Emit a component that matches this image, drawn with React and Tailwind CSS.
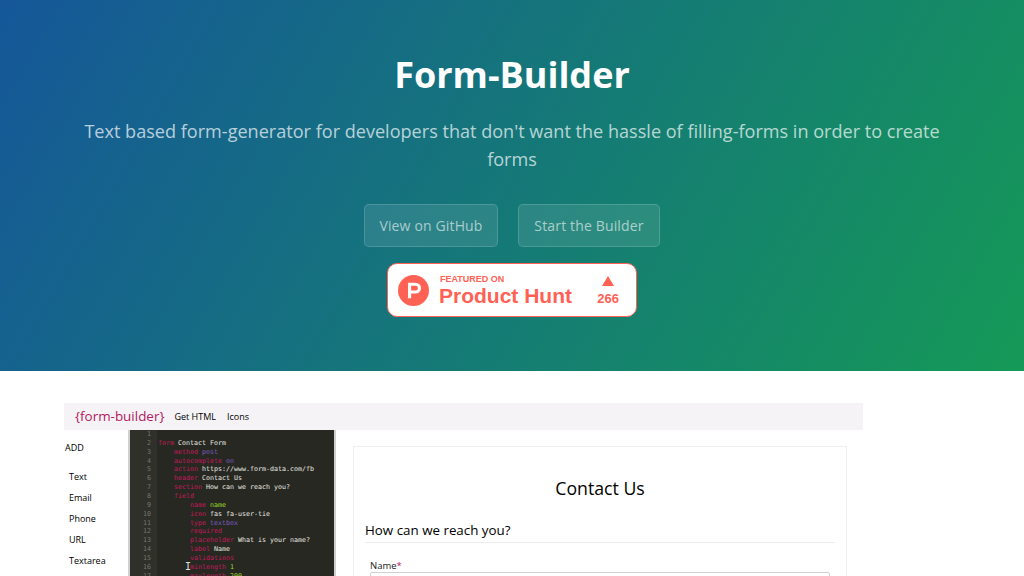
const code = [
  [],
  [["k","form"],["w"," Contact Form"]],
  [["i","    "],["k","method"],["p"," post"]],
  [["i","    "],["k","autocomplete"],["p"," on"]],
  [["i","    "],["k","action"],["w"," https://www.form-data.com/fb"]],
  [["i","    "],["k","header"],["w"," Contact Us"]],
  [["i","    "],["k","section"],["w"," How can we reach you?"]],
  [["i","    "],["k","field"]],
  [["i","        "],["k","name"],["g"," name"]],
  [["i","        "],["k","icon"],["w"," fas fa-user-tie"]],
  [["i","        "],["k","type"],["p"," textbox"]],
  [["i","        "],["k","required"]],
  [["i","        "],["k","placeholder"],["w"," What is your name?"]],
  [["i","        "],["k","label"],["w"," Name"]],
  [["i","        "],["k","validations"]],
  [["i","        "],["k","minlength"],["g"," 1"]],
  [["i","        "],["k","maxlength"],["g"," 200"]],
];

const tone = {
  k: "text-[#c2185b]",
  p: "text-[#7a5cc0]",
  w: "text-[#e8e8e0]",
  g: "text-[#9ad82a]",
  i: "",
};

const sideItems = ["Text", "Email", "Phone", "URL", "Textarea"];

function ProductHunt() {
  return (
    <div className="flex h-[54px] w-[250px] items-center rounded-[10px] border border-[#ff6154] bg-white pl-[10px] pr-[17px] font-['Liberation_Sans',sans-serif] text-[#ff6154]">
      <svg viewBox="0 0 40 40" className="h-[31px] w-[31px] shrink-0">
        <circle cx="20" cy="20" r="20" fill="#ff6154" />
        <path d="M22.7 20H17v-6h5.700a3 3 0 0 1 0 6zm0-10H13v20h4v-6h5.700a7 7 0 0 0 0-14z" fill="#fff" />
      </svg>
      <div className="ml-[10px] flex flex-col">
        <span className="pl-[1px] text-[9px] font-bold leading-[11px]">FEATURED ON</span>
        <span className="text-[21px] font-bold leading-[22px]">Product Hunt</span>
      </div>
      <div className="ml-auto flex flex-col items-center">
        <svg viewBox="0 0 12 10" className="mt-[1px] h-[10px] w-[12px]">
          <path d="M6 0l6 10H0z" fill="#ff6154" />
        </svg>
        <span className="mt-[6px] text-[13px] font-bold leading-[14px]">266</span>
      </div>
    </div>
  );
}

export default function App() {
  return (
    <div className="h-[576px] w-full overflow-hidden bg-white font-['Open_Sans',sans-serif]">
      <section className="flex h-[371px] flex-col items-center bg-[linear-gradient(120deg,#155799,#159957)] px-[64px] pt-[50px] text-white">
        <h1 className="text-[36px] font-bold leading-[50px]">Form-Builder</h1>
        <p className="mt-[17px] text-center text-[18.080px] leading-[28px] text-white/70">
          Text based form-generator for developers that don't want the hassle of filling-forms in order to create forms
        </p>
        <div className="mt-[31px] flex gap-[20px]">
          <a className="flex h-[43px] w-[134px] items-center justify-center rounded-[5px] border border-white/15 bg-white/10 text-[14px] tracking-[0.15px] text-white/60">View on GitHub</a>
          <a className="flex h-[43px] w-[142px] items-center justify-center rounded-[5px] border border-white/15 bg-white/10 text-[14px] tracking-[0.15px] text-white/60">Start the Builder</a>
        </div>
        <div className="mt-[16px]">
          <ProductHunt />
        </div>
      </section>

      <section className="px-[64px] pt-[32px]">
        <div className="w-[799px]">
          <div className="flex h-[27px] items-center bg-[#f5f3f5] pl-[11px]">
            <span className="text-[13.440px] text-[#b5195f]">{"{form-builder}"}</span>
            <span className="ml-[10px] text-[9px] text-black">Get HTML</span>
            <span className="ml-[11px] text-[9px] text-black">Icons</span>
          </div>
          <div className="flex">
            <aside className="w-[64px] shrink-0 pl-[1px] text-[9px] text-black">
              <div className="mt-[11px]">ADD</div>
              <ul className="mt-[16px] flex flex-col gap-[8.500px] pl-[4px] leading-[12.500px]">
                {sideItems.map((s) => <li key={s}>{s}</li>)}
              </ul>
            </aside>
            <div className="relative h-[160px] w-[208px] shrink-0 border-x-[2px] border-[#d0d0d0] bg-[#272822] font-['DejaVu_Sans_Mono',monospace] text-[6.650px] leading-[8.870px]">
              <div className="absolute inset-y-0 left-0 w-[27px] bg-[#2f3029]" />
              <div className="relative">
                {code.map((line, i) => (
                  <div key={i} className="flex h-[8.870px] whitespace-pre">
                    <span className="w-[21px] shrink-0 text-right text-[#77776c]">{i + 1}</span>
                    <span className="ml-[7px]">
                      {line.map(([t, s], j) => (
                        <span key={j} className={tone[t]}>{s ?? ""}</span>
                      ))}
                    </span>
                  </div>
                ))}
              </div>
              <span className="absolute left-[55px] top-[132px] text-[10px] leading-[10px] text-[#ddd]">I</span>
            </div>
            <main className="ml-[17px] mt-[16px] h-[200px] w-[494px] border border-[#efefef] px-[11px] text-black">
              <h2 className="mt-[28px] text-center text-[17.700px] leading-[26px]">Contact Us</h2>
              <h3 className="mt-[19px] border-b border-[#ececec] pb-[2px] text-[13.350px] leading-[20px]">How can we reach you?</h3>
              <div className="pl-[5px] pr-[5px] pt-[17px]">
                <div className="text-[9.500px] leading-[12px] text-[#222]">Name<span className="text-[#b5195f]">*</span></div>
                <div className="h-[20px] rounded-[2px] border border-[#d0d0d0]" />
              </div>
            </main>
          </div>
        </div>
      </section>
    </div>
  );
}
